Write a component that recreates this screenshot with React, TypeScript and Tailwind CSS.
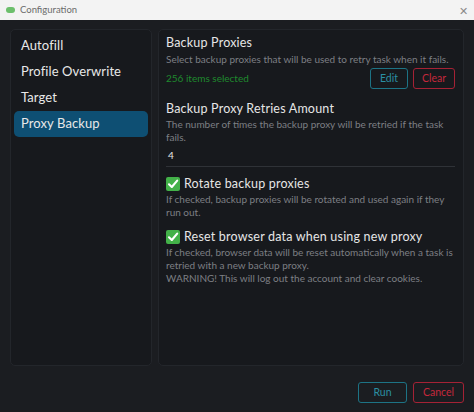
import React from "react";

function Check() {
  return (
    <svg width="14" height="14" viewBox="0 0 14 14" className="shrink-0">
      <rect x="0" y="0" width="14" height="14" rx="2" fill="#43b149" />
      <path d="M3 7.3 L5.8 10 L11.2 3.6" stroke="#fff" strokeWidth="2.1" fill="none" strokeLinecap="round" strokeLinejoin="round" />
    </svg>
  );
}

export default function App() {
  const font = { fontFamily: "Lato, 'Noto Sans', sans-serif" };
  return (
    <div className="w-[474px] h-[412px] flex flex-col bg-[#1b1d21] overflow-hidden" style={font}>
      <div className="h-[20px] bg-[#f3f3f3] flex items-center pl-[6px] pr-[6px] shrink-0">
        <div className="w-[9px] h-[6px] rounded-[3px] bg-[#6cbf6c] mr-[5px]" />
        <span className="text-[9.5px] text-[#6b6b6b]">Configuration</span>
        <span className="ml-auto text-[11px] text-[#8a8a8a] leading-none">✕</span>
      </div>
      <div className="flex-1 flex flex-col px-[10px] pt-[9px]">
        <div className="flex gap-[6px] h-[337px]">
          <div className="w-[142px] rounded-[5px] border border-[#23262b] bg-[#17191d] p-[3px] pt-[3px] flex flex-col">
            {["Autofill", "Profile Overwrite", "Target", "Proxy Backup"].map((t, i) => (
              <div
                key={t}
                className={
                  "h-[26px] flex items-center px-[7px] rounded-[5px] text-[13px] text-[#e8e8e8] tracking-[0.1px] " +
                  (i === 3 ? "bg-[#0e4f73]" : "")
                }
              >
                {t}
              </div>
            ))}
          </div>
          <div className="flex-1 rounded-[5px] border border-[#23262b] bg-[#17191d] pl-[7px] pr-[8px] pt-[5px] flex flex-col">
            <div className="text-[12.5px] text-[#e6e6e6] leading-[16px] tracking-[0.2px]">Backup Proxies</div>
            <div className="text-[10px] text-[#7d7f84] leading-[14px] mt-[1px]">
              Select backup proxies that will be used to retry task when it fails.
            </div>
            <div className="flex items-center mt-[2px]">
              <span className="text-[10px] text-[#1f8a2e]">256 items selected</span>
              <div className="ml-auto flex gap-[5px]">
                <button className="w-[38px] h-[21px] rounded-[3px] border border-[#1d7385] text-[10.5px] text-[#2b8fa3]">Edit</button>
                <button className="w-[42px] h-[21px] rounded-[3px] border border-[#a52235] text-[10.5px] text-[#c4283c]">Clear</button>
              </div>
            </div>
            <div className="text-[12.5px] text-[#e6e6e6] leading-[16px] mt-[12px] tracking-[0.2px]">Backup Proxy Retries Amount</div>
            <div className="text-[10px] text-[#7d7f84] leading-[13px] mt-[1px]">
              The number of times the backup proxy will be retried if the task fails.
            </div>
            <div className="text-[10px] text-[#e6e6e6] leading-[14px] mt-[4px] pl-[2px] pb-[4px] border-b border-[#2f3237]">4</div>
            <div className="flex items-center gap-[4px] mt-[9px]">
              <Check />
              <span className="text-[12.5px] text-[#e6e6e6] leading-[16px] tracking-[0.2px]">Rotate backup proxies</span>
            </div>
            <div className="text-[10px] text-[#7d7f84] leading-[13px] mt-[1px]">
              If checked, backup proxies will be rotated and used again if they run out.
            </div>
            <div className="flex items-center gap-[4px] mt-[10px]">
              <Check />
              <span className="text-[12.5px] text-[#e6e6e6] leading-[16px] tracking-[0.2px]">Reset browser data when using new proxy</span>
            </div>
            <div className="text-[10px] text-[#7d7f84] leading-[13px] mt-[1px]">
              If checked, browser data will be reset automatically when a task is retried with a new backup proxy.
              <br />
              WARNING! This will log out the account and clear cookies.
            </div>
          </div>
        </div>
        <div className="flex justify-end gap-[6px] mt-[16px]">
          <button className="w-[49px] h-[21px] rounded-[3px] border border-[#1d7385] text-[10.5px] text-[#2b8fa3]">Run</button>
          <button className="w-[51px] h-[21px] rounded-[3px] border border-[#a52235] text-[10.5px] text-[#c4283c]">Cancel</button>
        </div>
      </div>
    </div>
  );
}
